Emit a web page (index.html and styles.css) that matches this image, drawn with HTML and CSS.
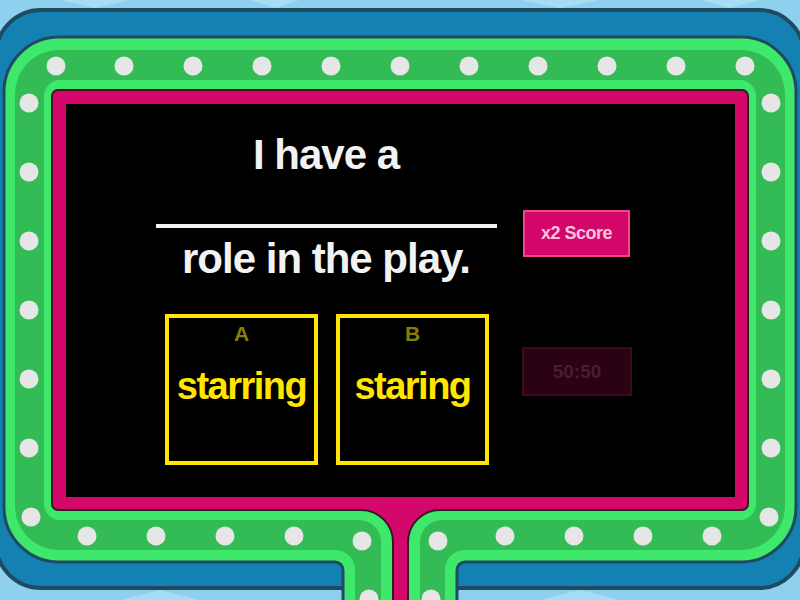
FILE: index.html
```html
<!DOCTYPE html>
<html lang="en">
<head>
<meta charset="utf-8">
<title>Gameshow quiz</title>
<link rel="stylesheet" href="styles.css">
</head>
<body>
<div class="stage">
  <svg class="frame" width="800" height="600" viewBox="0 0 800 600" xmlns="http://www.w3.org/2000/svg">
    <rect width="800" height="600" fill="#8ed0ee"/>
    <g fill="#a6dcf4">
      <polygon points="60,0 95,8 130,0"/>
      <polygon points="250,0 275,8 300,0"/>
      <polygon points="520,0 560,8 600,0"/>
      <polygon points="700,0 730,8 760,0"/>
      <polygon points="120,600 160,590 200,600"/>
      <polygon points="540,600 580,590 620,600"/>
    </g>
    <rect x="-4" y="10" width="808" height="578" rx="45" fill="#1481b3" stroke="#1f4a62" stroke-width="4"/>
    <path d="M 4 92 A 55 55 0 0 1 59 37 H 741 A 55 55 0 0 1 796 92 V 507 A 55 55 0 0 1 741 562 H 465 A 8 8 0 0 0 457 570 V 604 H 343 V 570 A 8 8 0 0 0 335 562 H 59 A 55 55 0 0 1 4 507 Z" fill="#3ee86b" stroke="#1f4a62" stroke-width="3"/>
    <path d="M 15 94 A 44 44 0 0 1 59 50 H 741 A 44 44 0 0 1 785 94 V 506 A 44 44 0 0 1 741 550 H 465 A 20 20 0 0 0 445 570 V 604 H 355 V 570 A 20 20 0 0 0 335 550 H 59 A 44 44 0 0 1 15 506 Z" fill="#33bb55"/>
    <path d="M 44 96 A 16 16 0 0 1 60 80 H 740 A 16 16 0 0 1 756 96 V 504 A 16 16 0 0 1 740 520 H 442 A 22 22 0 0 0 420 542 V 604 H 381 V 542 A 22 22 0 0 0 359 520 H 60 A 16 16 0 0 1 44 504 Z" fill="#3ee86b"/>
    <path d="M 52 96 A 6 6 0 0 1 58 90 H 742 A 6 6 0 0 1 748 96 V 504 A 6 6 0 0 1 742 510 H 440 A 32 32 0 0 0 408 542 V 604 H 393 V 542 A 32 32 0 0 0 361 510 H 58 A 6 6 0 0 1 52 504 Z" fill="#d4076b" stroke="#3a1526" stroke-width="2"/>
    <rect x="66" y="104" width="669" height="393" fill="#000"/>
    <g fill="#e6e6e6">
      <circle cx="56" cy="66" r="9.5"/><circle cx="124" cy="66" r="9.5"/><circle cx="193" cy="66" r="9.5"/>
      <circle cx="262" cy="66" r="9.5"/><circle cx="331" cy="66" r="9.5"/><circle cx="400" cy="66" r="9.5"/>
      <circle cx="469" cy="66" r="9.5"/><circle cx="538" cy="66" r="9.5"/><circle cx="607" cy="66" r="9.5"/>
      <circle cx="676" cy="66" r="9.5"/><circle cx="745" cy="66" r="9.5"/>
      <circle cx="29" cy="103" r="9.5"/><circle cx="29" cy="172" r="9.5"/><circle cx="29" cy="241" r="9.5"/>
      <circle cx="29" cy="310" r="9.5"/><circle cx="29" cy="379" r="9.5"/><circle cx="29" cy="448" r="9.5"/>
      <circle cx="31" cy="517" r="9.5"/>
      <circle cx="771" cy="103" r="9.5"/><circle cx="771" cy="172" r="9.5"/><circle cx="771" cy="241" r="9.5"/>
      <circle cx="771" cy="310" r="9.5"/><circle cx="771" cy="379" r="9.5"/><circle cx="771" cy="448" r="9.5"/>
      <circle cx="769" cy="517" r="9.5"/>
      <circle cx="87" cy="536" r="9.5"/><circle cx="156" cy="536" r="9.5"/><circle cx="225" cy="536" r="9.5"/>
      <circle cx="294" cy="536" r="9.5"/><circle cx="362" cy="541" r="9.5"/><circle cx="369" cy="599" r="9.5"/>
      <circle cx="438" cy="541" r="9.5"/><circle cx="431" cy="599" r="9.5"/>
      <circle cx="505" cy="536" r="9.5"/><circle cx="574" cy="536" r="9.5"/><circle cx="643" cy="536" r="9.5"/>
      <circle cx="712" cy="536" r="9.5"/>
    </g>
  </svg>
  <div class="screen">
    <div class="board">
      <div class="main">
        <div class="question">
          <div class="q-line">I have a</div>
          <div class="q-blank"><span class="blank-bar"></span></div>
          <div class="q-line">role in the play.</div>
        </div>
        <div class="answers">
          <div class="answer"><div class="letter">A</div><div class="word">starring</div></div>
          <div class="answer"><div class="letter">B</div><div class="word">staring</div></div>
        </div>
      </div>
      <div class="side">
        <div class="power x2">x2 Score</div>
        <div class="power fifty">50:50</div>
      </div>
    </div>
  </div>
</div>
</body>
</html>
```

FILE: styles.css
```css
html, body {
  margin: 0;
  padding: 0;
  background: #8ed0ee;
}

.stage {
  display: grid;
  width: 800px;
  height: 600px;
  overflow: hidden;
  font-family: "Liberation Sans", Arial, sans-serif;
  font-weight: bold;
}

.frame,
.screen {
  grid-area: 1 / 1;
}

.frame {
  display: block;
}

.screen {
  padding: 104px 65px 103px 66px;
}

.board {
  display: flex;
  height: 393px;
  padding-left: 80px;
  gap: 16px;
}

.main {
  width: 360px;
  display: flex;
  flex-direction: column;
  align-items: center;
  padding-top: 25px;
}

.question {
  display: flex;
  flex-direction: column;
  align-items: center;
  color: #f2f2f2;
  font-size: 42px;
  line-height: 52px;
  letter-spacing: -1px;
  text-align: center;
}

.q-line {
  white-space: nowrap;
}

.q-blank {
  box-sizing: border-box;
  height: 52px;
  padding-top: 43px;
}

.blank-bar {
  display: block;
  width: 341px;
  height: 4px;
  background: #f2f2f2;
}

.answers {
  display: flex;
  gap: 18px;
  margin-top: 29px;
  margin-left: 2px;
}

.answer {
  box-sizing: border-box;
  width: 153px;
  height: 151px;
  border: 4px solid #ffe500;
  display: flex;
  flex-direction: column;
  align-items: center;
  padding-top: 5px;
}

.letter {
  font-size: 21px;
  line-height: 22px;
  color: #877f00;
}

.word {
  font-size: 38px;
  line-height: 44px;
  letter-spacing: -1.5px;
  color: #ffe500;
  margin-top: 19px;
}

.side {
  display: flex;
  flex-direction: column;
  width: 110px;
  padding-top: 106px;
  gap: 90px;
}

.power {
  box-sizing: border-box;
  display: flex;
  align-items: center;
  justify-content: center;
  font-size: 18px;
}

.x2 {
  width: 107px;
  height: 47px;
  margin-left: 1px;
  background: #d3066a;
  border: 2px solid #f4438f;
  color: #f9c4dd;
  letter-spacing: -0.5px;
}

.fifty {
  width: 110px;
  height: 49px;
  background: #2a0213;
  border: 2px solid #3a0a1f;
  color: #4b1c30;
  font-size: 19px;
}
```
